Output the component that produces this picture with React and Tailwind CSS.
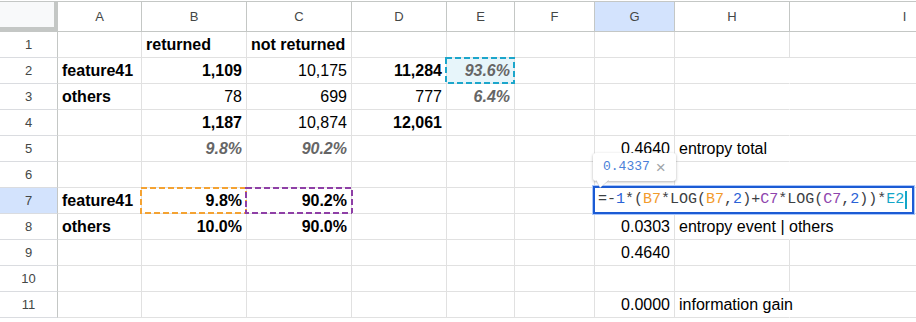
import React from 'react';

const COLS = ['A', 'B', 'C', 'D', 'E', 'F', 'G', 'H', 'I'];
const gray = 'font-bold italic text-[#666666]';

const data = {
  1: { B: { v: 'returned', s: 'font-bold' }, C: { v: 'not returned', s: 'font-bold' } },
  2: {
    A: { v: 'feature41', s: 'font-bold' },
    B: { v: '1,109', s: 'font-bold', r: true },
    C: { v: '10,175', r: true },
    D: { v: '11,284', s: 'font-bold', r: true },
    E: { v: '93.6%', s: gray, r: true },
  },
  3: {
    A: { v: 'others', s: 'font-bold' },
    B: { v: '78', r: true },
    C: { v: '699', r: true },
    D: { v: '777', r: true },
    E: { v: '6.4%', s: gray, r: true },
  },
  4: {
    B: { v: '1,187', s: 'font-bold', r: true },
    C: { v: '10,874', r: true },
    D: { v: '12,061', s: 'font-bold', r: true },
  },
  5: {
    B: { v: '9.8%', s: gray, r: true },
    C: { v: '90.2%', s: gray, r: true },
    G: { v: '0.4640', r: true },
    H: { v: 'entropy total' },
  },
  6: {},
  7: {
    A: { v: 'feature41', s: 'font-bold' },
    B: { v: '9.8%', s: 'font-bold', r: true },
    C: { v: '90.2%', s: 'font-bold', r: true },
  },
  8: {
    A: { v: 'others', s: 'font-bold' },
    B: { v: '10.0%', s: 'font-bold', r: true },
    C: { v: '90.0%', s: 'font-bold', r: true },
    G: { v: '0.0303', r: true },
    H: { v: 'entropy event | others' },
  },
  9: { G: { v: '0.4640', r: true } },
  10: {},
  11: { G: { v: '0.0000', r: true }, H: { v: 'information gain' } },
};

// rows where the H|I grid line is hidden
const noLineH = [2, 3, 4, 5, 6, 7, 8, 11];

const DashedBox = ({ w, h, color, className }) => (
  <svg width={w} height={h} className={`absolute pointer-events-none ${className}`}>
    <rect
      x="1"
      y="1"
      width={w - 2}
      height={h - 2}
      fill="none"
      stroke={color}
      strokeWidth="2"
      strokeDasharray="6 3"
    />
  </svg>
);

const FormulaEditor = () => (
  <>
    <div className="absolute left-[-2px] top-[-2px] w-[321px] h-[28px] z-10 bg-white border-2 border-[#1b5bd4] shadow-[0_0_0_1px_#aac6fa] flex items-center pl-[3px] font-['Liberation_Mono',monospace] text-[15px] leading-[18px] text-[#3c4043] whitespace-nowrap">
      <span>=-</span>
      <span className="text-[#2a62d6]">1</span>
      <span>*(</span>
      <span className="text-[#f29b2b]">B7</span>
      <span>*LOG(</span>
      <span className="text-[#f29b2b]">B7</span>
      <span>,</span>
      <span className="text-[#2a62d6]">2</span>
      <span>)+</span>
      <span className="text-[#8e44ad]">C7</span>
      <span>*LOG(</span>
      <span className="text-[#8e44ad]">C7</span>
      <span>,</span>
      <span className="text-[#2a62d6]">2</span>
      <span>))*</span>
      <span className="text-[#13a6c8]">E2</span>
      <span className="ml-px w-[2px] h-[18px] bg-[#13a6c8]" />
    </div>
    <div className="absolute left-[-2px] top-[-35px] w-[83px] h-[28px] z-20 bg-white rounded-[3px] shadow-[0_1px_3px_rgba(0,0,0,0.3)] flex items-center pl-[10px]">
      <span className="font-['Liberation_Mono',monospace] text-[13px] text-[#4b7fd8]">0.4337</span>
      <span className="ml-[6px] text-[17px] leading-none text-[#a0a4a8]">×</span>
      <svg width="20" height="9" className="absolute left-0 top-[27px]">
        <polygon points="3,0 16,0 7,8" fill="white" />
        <path d="M3 0 L7 8 L16 0" fill="none" stroke="rgba(0,0,0,0.12)" strokeWidth="1" />
      </svg>
    </div>
  </>
);

export default function App() {
  const rows = Array.from({ length: 11 }, (_, i) => i + 1);

  return (
    <div className="w-[916px] h-[322px] overflow-hidden bg-white text-black font-['Liberation_Sans',Arial,sans-serif]">
      <div className="w-[1020px] pt-px">
        <div className="grid grid-cols-[58px_84px_105px_105px_95px_68px_80px_80px_115px_230px]">
          <div className="h-[31px] bg-[#f8f9fa] border-t border-r-4 border-b-[5px] border-[#c4c7c5]" />
          {COLS.map((c) => (
            <div
              key={c}
              className={`h-[31px] flex items-center justify-center border-t border-r border-b border-[#c4c7c5] text-[13px] text-[#444746] ${
                c === 'G' ? 'bg-[#d3e3fd]' : 'bg-white'
              }`}
            >
              {c}
            </div>
          ))}

          {rows.map((r) => (
            <React.Fragment key={r}>
              <div
                className={`h-[26px] flex items-center justify-center border-r border-b border-r-[#c4c7c5] border-b-[#dadce0] text-[13px] text-[#444746] ${
                  r === 7 ? 'bg-[#d3e3fd]' : ''
                }`}
              >
                {r}
              </div>
              {COLS.map((c) => {
                const cell = data[r][c];
                const hideLine = c === 'H' && noLineH.includes(r);
                return (
                  <div
                    key={c}
                    className={`relative h-[26px] flex items-end px-1 pb-[3px] border-r border-b border-[#e1e1e1] text-[16px] leading-[18px] whitespace-nowrap ${
                      cell?.r ? 'justify-end' : 'justify-start'
                    } ${hideLine ? 'border-r-transparent' : ''} ${r === 2 && c === 'E' ? 'bg-[#e7f5fa]' : ''}`}
                  >
                    {cell && <span className={cell.s || ''}>{cell.v}</span>}
                    {r === 2 && c === 'E' && (
                      <DashedBox w={70} h={27} color="#1ca6cb" className="left-[-2px] top-[-1px]" />
                    )}
                    {r === 7 && c === 'B' && (
                      <DashedBox w={107} h={27} color="#f4a232" className="left-[-2px] top-[-1px]" />
                    )}
                    {r === 7 && c === 'C' && (
                      <DashedBox w={108} h={27} color="#8e3fa6" className="left-[-2px] top-[-1px]" />
                    )}
                    {r === 7 && c === 'G' && <FormulaEditor />}
                  </div>
                );
              })}
            </React.Fragment>
          ))}
        </div>
      </div>
    </div>
  );
}
